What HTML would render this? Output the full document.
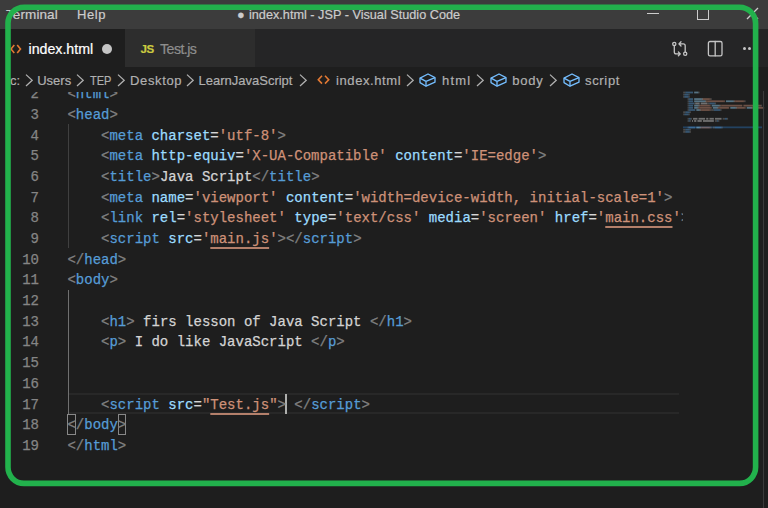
<!DOCTYPE html>
<html><head><meta charset="utf-8">
<style>
html,body{margin:0;padding:0;}
body{width:768px;height:508px;overflow:hidden;position:relative;background:#1e1e1e;font-family:"Liberation Sans",sans-serif;}
.abs{position:absolute;}
#title{left:0;top:0;width:768px;height:29px;background:#3c3c3c;color:#cccccc;font-size:13px;-webkit-text-stroke:0.2px currentColor;}
#title .m{position:absolute;top:7px;line-height:16px;}
#tabs{left:0;top:29px;width:768px;height:38px;background:#252526;-webkit-text-stroke:0.2px currentColor;}
#tab1{left:0;top:0;width:125px;height:38px;background:#1e1e1e;}
#tab2{left:125px;top:0;width:130px;height:38px;background:#2d2d2d;}
.ct{position:absolute;top:5.9px;line-height:15px;white-space:pre;}
#crumbs{left:0;top:67px;width:768px;height:25px;background:#1e1e1e;color:#b0b0b0;font-size:13px;-webkit-text-stroke:0.2px currentColor;}
#editor{left:0;top:92px;width:768px;height:416px;overflow:hidden;}
.ln,.num{position:absolute;white-space:pre;font-family:"Liberation Mono",monospace;font-size:14px;line-height:20.676px;height:20.676px;-webkit-text-stroke:0.25px currentColor;}
.ln{left:67.45px;}
.num{left:0;width:39px;text-align:right;color:#858585;}
.u{text-decoration:underline;text-decoration-color:rgba(206,145,120,0.85);text-decoration-thickness:2px;text-underline-offset:4px;}
#green{left:5px;top:4.5px;width:742.5px;height:470.5px;border:5.5px solid #22b14c;border-radius:19px;}
</style></head><body>
<div id="title" class="abs">
  <div class="m" style="left:6px;font-size:13.5px;letter-spacing:0.1px">Terminal</div>
  <div class="m" style="left:77px;letter-spacing:0.6px">Help</div>
  <div class="m" style="left:237px;font-size:12.7px">&#9679;</div>
  <div class="m" style="left:249px;font-size:12.7px">index.html - JSP - Visual Studio Code</div>
  <div class="abs" style="left:647px;top:13px;width:12px;height:1px;background:#cccccc"></div>
  <div class="abs" style="left:697px;top:7.5px;width:10px;height:10px;border:1px solid #cccccc"></div>
  <svg class="abs" style="left:746px;top:6.5px" width="13" height="13" viewBox="0 0 13 13"><path d="M1 1L12 12M12 1L1 12" stroke="#cccccc" stroke-width="1.35"/></svg>
</div>
<div id="tabs" class="abs">
  <div id="tab1" class="abs">
    <svg class="abs" style="left:10px;top:15px" width="12" height="10" viewBox="0 0 12 10"><path d="M4.3 1L1 5L4.3 9M7.2 1L10.5 5L7.2 9" fill="none" stroke="#e37933" stroke-width="1.6"/></svg>
    <div class="abs" style="left:28.5px;top:11.4px;font-size:14.2px;color:#ffffff;line-height:18px">index.html</div>
    <div class="abs" style="left:101.6px;top:14.9px;width:10px;height:10px;border-radius:50%;background:#c5c5c5"></div>
  </div>
  <div id="tab2" class="abs">
    <div class="abs" style="left:15.5px;top:13px;font-size:11.5px;font-weight:bold;color:#cbcb41;line-height:14px;letter-spacing:-0.3px">JS</div>
    <div class="abs" style="left:35px;top:11.4px;font-size:14.2px;color:#8e8e8e;line-height:18px;letter-spacing:-0.55px">Test.js</div>
  </div>
  <svg class="abs" style="left:666px;top:7px" width="64" height="26" viewBox="0 0 64 26"><g fill="none" stroke="#c5c5c5" stroke-width="1.3" stroke-linecap="round" stroke-linejoin="round"><circle cx="8.3" cy="7.9" r="1.6"/><circle cx="19.2" cy="17.8" r="1.6"/><path d="M8.3 9.6V16Q8.3 17.9 10.2 17.9H14.2M12.4 16L14.3 17.9L12.4 19.8M12.9 7.9H17.3Q19.2 7.9 19.2 9.8V16.1M15 5.8L12.9 7.9L15 10"/><rect x="42.4" y="5.5" width="13.6" height="14.3" rx="1.6"/><path d="M49.2 5.5V19.8"/></g></svg>
  <div class="abs" style="left:742.5px;top:17.5px;width:3px;height:3px;border-radius:50%;background:#c5c5c5"></div>
  <div class="abs" style="left:748px;top:17.5px;width:3px;height:3px;border-radius:50%;background:#c5c5c5"></div>
  <div class="abs" style="left:753.5px;top:17.5px;width:3px;height:3px;border-radius:50%;background:#c5c5c5"></div>
</div>
<div id="crumbs" class="abs">
  <div class="ct" style="left:10px">c:</div>
  <svg class="abs" style="left:24.8px;top:7px" width="8" height="13" viewBox="0 0 8 13"><path d="M1 0.6L7.2 6.3L1 12" fill="none" stroke="#b0b0b0" stroke-width="1.25"/></svg>
  <div class="ct" style="left:37.2px">Users</div>
  <svg class="abs" style="left:76.2px;top:7px" width="8" height="13" viewBox="0 0 8 13"><path d="M1 0.6L7.2 6.3L1 12" fill="none" stroke="#b0b0b0" stroke-width="1.25"/></svg>
  <div class="ct" style="left:90.3px;transform:scaleX(0.85);transform-origin:0 0">TEP</div>
  <svg class="abs" style="left:116.6px;top:7px" width="8" height="13" viewBox="0 0 8 13"><path d="M1 0.6L7.2 6.3L1 12" fill="none" stroke="#b0b0b0" stroke-width="1.25"/></svg>
  <div class="ct" style="left:130px;letter-spacing:0.63px">Desktop</div>
  <svg class="abs" style="left:185.7px;top:7px" width="8" height="13" viewBox="0 0 8 13"><path d="M1 0.6L7.2 6.3L1 12" fill="none" stroke="#b0b0b0" stroke-width="1.25"/></svg>
  <div class="ct" style="left:198.5px">LearnJavaScript</div>
  <svg class="abs" style="left:298.9px;top:7px" width="8" height="13" viewBox="0 0 8 13"><path d="M1 0.6L7.2 6.3L1 12" fill="none" stroke="#b0b0b0" stroke-width="1.25"/></svg>
  <svg class="abs" style="left:316.5px;top:7.7px" width="13" height="10" viewBox="0 0 13 10"><path d="M5 0.8L1.3 4.7L5 8.6M8 0.8L11.7 4.7L8 8.6" fill="none" stroke="#e37933" stroke-width="1.6"/></svg>
  <div class="ct" style="left:336px;letter-spacing:0.6px">index.html</div>
  <svg class="abs" style="left:405.7px;top:7px" width="8" height="13" viewBox="0 0 8 13"><path d="M1 0.6L7.2 6.3L1 12" fill="none" stroke="#b0b0b0" stroke-width="1.25"/></svg>
  <svg class="abs" style="left:419.3px;top:5.5px" width="17" height="14" viewBox="0 0 17 14"><g fill="none" stroke="#75beff" stroke-width="1.3" stroke-linejoin="round"><path d="M9 1L16 4.6V9.2L7 13.2L1 9.6V5.1Z"/><path d="M1 5.1L7 8.4L16 4.6M7 8.4V13.2"/></g></svg>
  <div class="ct" style="left:442px;letter-spacing:1.2px">html</div>
  <svg class="abs" style="left:475.6px;top:7px" width="8" height="13" viewBox="0 0 8 13"><path d="M1 0.6L7.2 6.3L1 12" fill="none" stroke="#b0b0b0" stroke-width="1.25"/></svg>
  <svg class="abs" style="left:489.6px;top:5.5px" width="17" height="14" viewBox="0 0 17 14"><g fill="none" stroke="#75beff" stroke-width="1.3" stroke-linejoin="round"><path d="M9 1L16 4.6V9.2L7 13.2L1 9.6V5.1Z"/><path d="M1 5.1L7 8.4L16 4.6M7 8.4V13.2"/></g></svg>
  <div class="ct" style="left:512.2px;letter-spacing:0.77px">body</div>
  <svg class="abs" style="left:548.9px;top:7px" width="8" height="13" viewBox="0 0 8 13"><path d="M1 0.6L7.2 6.3L1 12" fill="none" stroke="#b0b0b0" stroke-width="1.25"/></svg>
  <svg class="abs" style="left:563.0px;top:5.5px" width="17" height="14" viewBox="0 0 17 14"><g fill="none" stroke="#75beff" stroke-width="1.3" stroke-linejoin="round"><path d="M9 1L16 4.6V9.2L7 13.2L1 9.6V5.1Z"/><path d="M1 5.1L7 8.4L16 4.6M7 8.4V13.2"/></g></svg>
  <div class="ct" style="left:585px;letter-spacing:0.68px">script</div>
</div>
<div id="editor" class="abs">
<div class="abs" style="left:0;top:0;width:768px;height:416px">
<div style="position:absolute;left:0;top:-92px">
<div class="abs" style="left:67.5px;top:124.43px;width:1px;height:124.06px;background:#404040"></div>
<div class="abs" style="left:67.5px;top:289.84px;width:1px;height:124.06px;background:#707070"></div>
<div class="abs" style="left:68.5px;top:393.2px;width:610.5px;height:2.2px;background:#282828"></div>
<div class="abs" style="left:68.5px;top:412.1px;width:610.5px;height:2.2px;background:#282828"></div>
<div class="abs" style="left:67.45px;top:413.89px;width:6.40px;height:18.68px;border:1px solid #888888;box-sizing:content-box"></div>
<div class="abs" style="left:117.86px;top:413.89px;width:6.40px;height:18.68px;border:1px solid #888888;box-sizing:content-box"></div>
<div class="abs" style="left:284.68px;top:393.52px;width:2.4px;height:20.08px;background:#aeafad"></div>
<div class="num" style="top:63.70px">1</div>
<div class="num" style="top:84.38px">2</div>
<div class="num" style="top:105.05px">3</div>
<div class="num" style="top:125.73px">4</div>
<div class="num" style="top:146.40px">5</div>
<div class="num" style="top:167.08px">6</div>
<div class="num" style="top:187.76px">7</div>
<div class="num" style="top:208.43px">8</div>
<div class="num" style="top:229.11px">9</div>
<div class="num" style="top:249.78px">10</div>
<div class="num" style="top:270.46px">11</div>
<div class="num" style="top:291.14px">12</div>
<div class="num" style="top:311.81px">13</div>
<div class="num" style="top:332.49px">14</div>
<div class="num" style="top:353.16px">15</div>
<div class="num" style="top:373.84px">16</div>
<div class="num" style="top:394.52px">17</div>
<div class="num" style="top:415.19px">18</div>
<div class="num" style="top:435.87px">19</div>
<div class="ln" style="top:63.70px"><span style="color:#808080">&lt;!</span><span style="color:#569cd6">DOCTYPE</span><span style="color:#d4d4d4"> </span><span style="color:#9cdcfe">html</span><span style="color:#808080">&gt;</span></div>
<div class="ln" style="top:84.38px"><span style="color:#808080">&lt;</span><span style="color:#569cd6">html</span><span style="color:#808080">&gt;</span></div>
<div class="ln" style="top:105.05px"><span style="color:#808080">&lt;</span><span style="color:#569cd6">head</span><span style="color:#808080">&gt;</span></div>
<div class="ln" style="top:125.73px"><span style="color:#d4d4d4">    </span><span style="color:#808080">&lt;</span><span style="color:#569cd6">meta</span><span style="color:#d4d4d4"> </span><span style="color:#9cdcfe">charset</span><span style="color:#d4d4d4">=</span><span style="color:#ce9178">&#x27;</span><span style="color:#ce9178">utf-8</span><span style="color:#ce9178">&#x27;</span><span style="color:#808080">&gt;</span></div>
<div class="ln" style="top:146.40px"><span style="color:#d4d4d4">    </span><span style="color:#808080">&lt;</span><span style="color:#569cd6">meta</span><span style="color:#d4d4d4"> </span><span style="color:#9cdcfe">http-equiv</span><span style="color:#d4d4d4">=</span><span style="color:#ce9178">&#x27;</span><span style="color:#ce9178">X-UA-Compatible</span><span style="color:#ce9178">&#x27;</span><span style="color:#d4d4d4"> </span><span style="color:#9cdcfe">content</span><span style="color:#d4d4d4">=</span><span style="color:#ce9178">&#x27;</span><span style="color:#ce9178">IE=edge</span><span style="color:#ce9178">&#x27;</span><span style="color:#808080">&gt;</span></div>
<div class="ln" style="top:167.08px"><span style="color:#d4d4d4">    </span><span style="color:#808080">&lt;</span><span style="color:#569cd6">title</span><span style="color:#808080">&gt;</span><span style="color:#d4d4d4">Java Script</span><span style="color:#808080">&lt;/</span><span style="color:#569cd6">title</span><span style="color:#808080">&gt;</span></div>
<div class="ln" style="top:187.76px"><span style="color:#d4d4d4">    </span><span style="color:#808080">&lt;</span><span style="color:#569cd6">meta</span><span style="color:#d4d4d4"> </span><span style="color:#9cdcfe">name</span><span style="color:#d4d4d4">=</span><span style="color:#ce9178">&#x27;</span><span style="color:#ce9178">viewport</span><span style="color:#ce9178">&#x27;</span><span style="color:#d4d4d4"> </span><span style="color:#9cdcfe">content</span><span style="color:#d4d4d4">=</span><span style="color:#ce9178">&#x27;</span><span style="color:#ce9178">width=device-width, initial-scale=1</span><span style="color:#ce9178">&#x27;</span><span style="color:#808080">&gt;</span></div>
<div class="ln" style="top:208.43px"><span style="color:#d4d4d4">    </span><span style="color:#808080">&lt;</span><span style="color:#569cd6">link</span><span style="color:#d4d4d4"> </span><span style="color:#9cdcfe">rel</span><span style="color:#d4d4d4">=</span><span style="color:#ce9178">&#x27;</span><span style="color:#ce9178">stylesheet</span><span style="color:#ce9178">&#x27;</span><span style="color:#d4d4d4"> </span><span style="color:#9cdcfe">type</span><span style="color:#d4d4d4">=</span><span style="color:#ce9178">&#x27;</span><span style="color:#ce9178">text/css</span><span style="color:#ce9178">&#x27;</span><span style="color:#d4d4d4"> </span><span style="color:#9cdcfe">media</span><span style="color:#d4d4d4">=</span><span style="color:#ce9178">&#x27;</span><span style="color:#ce9178">screen</span><span style="color:#ce9178">&#x27;</span><span style="color:#d4d4d4"> </span><span style="color:#9cdcfe">href</span><span style="color:#d4d4d4">=</span><span style="color:#ce9178">&#x27;</span><span style="color:#ce9178" class="u">main.css</span><span style="color:#ce9178">&#x27;</span><span style="color:#808080">&gt;</span></div>
<div class="ln" style="top:229.11px"><span style="color:#d4d4d4">    </span><span style="color:#808080">&lt;</span><span style="color:#569cd6">script</span><span style="color:#d4d4d4"> </span><span style="color:#9cdcfe">src</span><span style="color:#d4d4d4">=</span><span style="color:#ce9178">&#x27;</span><span style="color:#ce9178" class="u">main.js</span><span style="color:#ce9178">&#x27;</span><span style="color:#808080">&gt;</span><span style="color:#808080">&lt;/</span><span style="color:#569cd6">script</span><span style="color:#808080">&gt;</span></div>
<div class="ln" style="top:249.78px"><span style="color:#808080">&lt;/</span><span style="color:#569cd6">head</span><span style="color:#808080">&gt;</span></div>
<div class="ln" style="top:270.46px"><span style="color:#808080">&lt;</span><span style="color:#569cd6">body</span><span style="color:#808080">&gt;</span></div>
<div class="ln" style="top:291.14px"></div>
<div class="ln" style="top:311.81px"><span style="color:#d4d4d4">    </span><span style="color:#808080">&lt;</span><span style="color:#569cd6">h1</span><span style="color:#808080">&gt;</span><span style="color:#d4d4d4"> firs lesson of Java Script </span><span style="color:#808080">&lt;/</span><span style="color:#569cd6">h1</span><span style="color:#808080">&gt;</span></div>
<div class="ln" style="top:332.49px"><span style="color:#d4d4d4">    </span><span style="color:#808080">&lt;</span><span style="color:#569cd6">p</span><span style="color:#808080">&gt;</span><span style="color:#d4d4d4"> I do like JavaScript </span><span style="color:#808080">&lt;/</span><span style="color:#569cd6">p</span><span style="color:#808080">&gt;</span></div>
<div class="ln" style="top:353.16px"></div>
<div class="ln" style="top:373.84px"></div>
<div class="ln" style="top:394.52px"><span style="color:#d4d4d4">    </span><span style="color:#808080">&lt;</span><span style="color:#569cd6">script</span><span style="color:#d4d4d4"> </span><span style="color:#9cdcfe">src</span><span style="color:#d4d4d4">=</span><span style="color:#ce9178">&quot;</span><span style="color:#ce9178" class="u">Test.js</span><span style="color:#ce9178">&quot;</span><span style="color:#808080">&gt;</span><span style="color:#d4d4d4"> </span><span style="color:#808080">&lt;/</span><span style="color:#569cd6">script</span><span style="color:#808080">&gt;</span></div>
<div class="ln" style="top:415.19px"><span style="color:#808080">&lt;/</span><span style="color:#569cd6">body</span><span style="color:#808080">&gt;</span></div>
<div class="ln" style="top:435.87px"><span style="color:#808080">&lt;/</span><span style="color:#569cd6">html</span><span style="color:#808080">&gt;</span></div>
</div>
</div>
</div>
<div class="abs" style="left:683px;top:92px;width:85px;height:416px;background:#1e1e1e"></div>
<svg class="abs" style="left:0;top:0" width="768" height="508">
<rect x="683" y="126.44" width="79" height="1.8" fill="#264f78" fill-opacity="0.75"/>
<rect x="683.20" y="91.60" width="2.19" height="1.8" fill="#808080" fill-opacity="0.45"/>
<rect x="685.39" y="91.60" width="7.67" height="1.8" fill="#569cd6" fill-opacity="0.45"/>
<rect x="694.15" y="91.60" width="4.38" height="1.8" fill="#9cdcfe" fill-opacity="0.45"/>
<rect x="698.53" y="91.60" width="1.09" height="1.8" fill="#808080" fill-opacity="0.45"/>
<rect x="683.20" y="93.79" width="1.09" height="1.8" fill="#808080" fill-opacity="0.45"/>
<rect x="684.30" y="93.79" width="4.38" height="1.8" fill="#569cd6" fill-opacity="0.45"/>
<rect x="688.68" y="93.79" width="1.09" height="1.8" fill="#808080" fill-opacity="0.45"/>
<rect x="683.20" y="95.98" width="1.09" height="1.8" fill="#808080" fill-opacity="0.45"/>
<rect x="684.30" y="95.98" width="4.38" height="1.8" fill="#569cd6" fill-opacity="0.45"/>
<rect x="688.68" y="95.98" width="1.09" height="1.8" fill="#808080" fill-opacity="0.45"/>
<rect x="687.58" y="98.17" width="1.09" height="1.8" fill="#808080" fill-opacity="0.45"/>
<rect x="688.68" y="98.17" width="4.38" height="1.8" fill="#569cd6" fill-opacity="0.45"/>
<rect x="694.15" y="98.17" width="7.67" height="1.8" fill="#9cdcfe" fill-opacity="0.45"/>
<rect x="701.82" y="98.17" width="1.09" height="1.8" fill="#d4d4d4" fill-opacity="0.45"/>
<rect x="702.91" y="98.17" width="1.09" height="1.8" fill="#ce9178" fill-opacity="0.45"/>
<rect x="704.00" y="98.17" width="5.47" height="1.8" fill="#ce9178" fill-opacity="0.45"/>
<rect x="709.48" y="98.17" width="1.09" height="1.8" fill="#ce9178" fill-opacity="0.45"/>
<rect x="710.58" y="98.17" width="1.09" height="1.8" fill="#808080" fill-opacity="0.45"/>
<rect x="687.58" y="100.36" width="1.09" height="1.8" fill="#808080" fill-opacity="0.45"/>
<rect x="688.68" y="100.36" width="4.38" height="1.8" fill="#569cd6" fill-opacity="0.45"/>
<rect x="694.15" y="100.36" width="10.95" height="1.8" fill="#9cdcfe" fill-opacity="0.45"/>
<rect x="705.10" y="100.36" width="1.09" height="1.8" fill="#d4d4d4" fill-opacity="0.45"/>
<rect x="706.20" y="100.36" width="1.09" height="1.8" fill="#ce9178" fill-opacity="0.45"/>
<rect x="707.29" y="100.36" width="16.43" height="1.8" fill="#ce9178" fill-opacity="0.45"/>
<rect x="723.72" y="100.36" width="1.09" height="1.8" fill="#ce9178" fill-opacity="0.45"/>
<rect x="725.91" y="100.36" width="7.67" height="1.8" fill="#9cdcfe" fill-opacity="0.45"/>
<rect x="733.57" y="100.36" width="1.09" height="1.8" fill="#d4d4d4" fill-opacity="0.45"/>
<rect x="734.67" y="100.36" width="1.09" height="1.8" fill="#ce9178" fill-opacity="0.45"/>
<rect x="735.76" y="100.36" width="7.67" height="1.8" fill="#ce9178" fill-opacity="0.45"/>
<rect x="743.43" y="100.36" width="1.09" height="1.8" fill="#ce9178" fill-opacity="0.45"/>
<rect x="744.52" y="100.36" width="1.09" height="1.8" fill="#808080" fill-opacity="0.45"/>
<rect x="687.58" y="102.55" width="1.09" height="1.8" fill="#808080" fill-opacity="0.45"/>
<rect x="688.68" y="102.55" width="5.47" height="1.8" fill="#569cd6" fill-opacity="0.45"/>
<rect x="694.15" y="102.55" width="1.09" height="1.8" fill="#808080" fill-opacity="0.45"/>
<rect x="695.25" y="102.55" width="4.38" height="1.8" fill="#d4d4d4" fill-opacity="0.45"/>
<rect x="700.72" y="102.55" width="6.57" height="1.8" fill="#d4d4d4" fill-opacity="0.45"/>
<rect x="707.29" y="102.55" width="2.19" height="1.8" fill="#808080" fill-opacity="0.45"/>
<rect x="709.48" y="102.55" width="5.47" height="1.8" fill="#569cd6" fill-opacity="0.45"/>
<rect x="714.96" y="102.55" width="1.09" height="1.8" fill="#808080" fill-opacity="0.45"/>
<rect x="687.58" y="104.74" width="1.09" height="1.8" fill="#808080" fill-opacity="0.45"/>
<rect x="688.68" y="104.74" width="4.38" height="1.8" fill="#569cd6" fill-opacity="0.45"/>
<rect x="694.15" y="104.74" width="4.38" height="1.8" fill="#9cdcfe" fill-opacity="0.45"/>
<rect x="698.53" y="104.74" width="1.09" height="1.8" fill="#d4d4d4" fill-opacity="0.45"/>
<rect x="699.62" y="104.74" width="1.09" height="1.8" fill="#ce9178" fill-opacity="0.45"/>
<rect x="700.72" y="104.74" width="8.76" height="1.8" fill="#ce9178" fill-opacity="0.45"/>
<rect x="709.48" y="104.74" width="1.09" height="1.8" fill="#ce9178" fill-opacity="0.45"/>
<rect x="711.67" y="104.74" width="7.67" height="1.8" fill="#9cdcfe" fill-opacity="0.45"/>
<rect x="719.34" y="104.74" width="1.09" height="1.8" fill="#d4d4d4" fill-opacity="0.45"/>
<rect x="720.43" y="104.74" width="1.09" height="1.8" fill="#ce9178" fill-opacity="0.45"/>
<rect x="721.53" y="104.74" width="20.80" height="1.8" fill="#ce9178" fill-opacity="0.45"/>
<rect x="743.43" y="104.74" width="16.43" height="1.8" fill="#ce9178" fill-opacity="0.45"/>
<rect x="759.85" y="104.74" width="1.09" height="1.8" fill="#ce9178" fill-opacity="0.45"/>
<rect x="760.95" y="104.74" width="1.09" height="1.8" fill="#808080" fill-opacity="0.45"/>
<rect x="687.58" y="106.93" width="1.09" height="1.8" fill="#808080" fill-opacity="0.45"/>
<rect x="688.68" y="106.93" width="4.38" height="1.8" fill="#569cd6" fill-opacity="0.45"/>
<rect x="694.15" y="106.93" width="3.29" height="1.8" fill="#9cdcfe" fill-opacity="0.45"/>
<rect x="697.44" y="106.93" width="1.09" height="1.8" fill="#d4d4d4" fill-opacity="0.45"/>
<rect x="698.53" y="106.93" width="1.09" height="1.8" fill="#ce9178" fill-opacity="0.45"/>
<rect x="699.62" y="106.93" width="10.95" height="1.8" fill="#ce9178" fill-opacity="0.45"/>
<rect x="710.58" y="106.93" width="1.09" height="1.8" fill="#ce9178" fill-opacity="0.45"/>
<rect x="712.77" y="106.93" width="4.38" height="1.8" fill="#9cdcfe" fill-opacity="0.45"/>
<rect x="717.15" y="106.93" width="1.09" height="1.8" fill="#d4d4d4" fill-opacity="0.45"/>
<rect x="718.24" y="106.93" width="1.09" height="1.8" fill="#ce9178" fill-opacity="0.45"/>
<rect x="719.34" y="106.93" width="8.76" height="1.8" fill="#ce9178" fill-opacity="0.45"/>
<rect x="728.10" y="106.93" width="1.09" height="1.8" fill="#ce9178" fill-opacity="0.45"/>
<rect x="730.29" y="106.93" width="5.47" height="1.8" fill="#9cdcfe" fill-opacity="0.45"/>
<rect x="735.76" y="106.93" width="1.09" height="1.8" fill="#d4d4d4" fill-opacity="0.45"/>
<rect x="736.86" y="106.93" width="1.09" height="1.8" fill="#ce9178" fill-opacity="0.45"/>
<rect x="737.95" y="106.93" width="6.57" height="1.8" fill="#ce9178" fill-opacity="0.45"/>
<rect x="744.52" y="106.93" width="1.09" height="1.8" fill="#ce9178" fill-opacity="0.45"/>
<rect x="746.71" y="106.93" width="4.38" height="1.8" fill="#9cdcfe" fill-opacity="0.45"/>
<rect x="751.09" y="106.93" width="1.09" height="1.8" fill="#d4d4d4" fill-opacity="0.45"/>
<rect x="752.19" y="106.93" width="1.09" height="1.8" fill="#ce9178" fill-opacity="0.45"/>
<rect x="753.28" y="106.93" width="8.76" height="1.8" fill="#ce9178" fill-opacity="0.45"/>
<rect x="762.04" y="106.93" width="1.09" height="1.8" fill="#ce9178" fill-opacity="0.45"/>
<rect x="763.13" y="106.93" width="1.09" height="1.8" fill="#808080" fill-opacity="0.45"/>
<rect x="687.58" y="109.12" width="1.09" height="1.8" fill="#808080" fill-opacity="0.45"/>
<rect x="688.68" y="109.12" width="6.57" height="1.8" fill="#569cd6" fill-opacity="0.45"/>
<rect x="696.34" y="109.12" width="3.29" height="1.8" fill="#9cdcfe" fill-opacity="0.45"/>
<rect x="699.62" y="109.12" width="1.09" height="1.8" fill="#d4d4d4" fill-opacity="0.45"/>
<rect x="700.72" y="109.12" width="1.09" height="1.8" fill="#ce9178" fill-opacity="0.45"/>
<rect x="701.82" y="109.12" width="7.67" height="1.8" fill="#ce9178" fill-opacity="0.45"/>
<rect x="709.48" y="109.12" width="1.09" height="1.8" fill="#ce9178" fill-opacity="0.45"/>
<rect x="710.58" y="109.12" width="1.09" height="1.8" fill="#808080" fill-opacity="0.45"/>
<rect x="711.67" y="109.12" width="2.19" height="1.8" fill="#808080" fill-opacity="0.45"/>
<rect x="713.86" y="109.12" width="6.57" height="1.8" fill="#569cd6" fill-opacity="0.45"/>
<rect x="720.43" y="109.12" width="1.09" height="1.8" fill="#808080" fill-opacity="0.45"/>
<rect x="683.20" y="111.31" width="2.19" height="1.8" fill="#808080" fill-opacity="0.45"/>
<rect x="685.39" y="111.31" width="4.38" height="1.8" fill="#569cd6" fill-opacity="0.45"/>
<rect x="689.77" y="111.31" width="1.09" height="1.8" fill="#808080" fill-opacity="0.45"/>
<rect x="683.20" y="113.50" width="1.09" height="1.8" fill="#808080" fill-opacity="0.45"/>
<rect x="684.30" y="113.50" width="4.38" height="1.8" fill="#569cd6" fill-opacity="0.45"/>
<rect x="688.68" y="113.50" width="1.09" height="1.8" fill="#808080" fill-opacity="0.45"/>
<rect x="687.58" y="117.88" width="1.09" height="1.8" fill="#808080" fill-opacity="0.45"/>
<rect x="688.68" y="117.88" width="2.19" height="1.8" fill="#569cd6" fill-opacity="0.45"/>
<rect x="690.87" y="117.88" width="1.09" height="1.8" fill="#808080" fill-opacity="0.45"/>
<rect x="693.06" y="117.88" width="4.38" height="1.8" fill="#d4d4d4" fill-opacity="0.45"/>
<rect x="698.53" y="117.88" width="6.57" height="1.8" fill="#d4d4d4" fill-opacity="0.45"/>
<rect x="706.20" y="117.88" width="2.19" height="1.8" fill="#d4d4d4" fill-opacity="0.45"/>
<rect x="709.48" y="117.88" width="4.38" height="1.8" fill="#d4d4d4" fill-opacity="0.45"/>
<rect x="714.96" y="117.88" width="6.57" height="1.8" fill="#d4d4d4" fill-opacity="0.45"/>
<rect x="722.62" y="117.88" width="2.19" height="1.8" fill="#808080" fill-opacity="0.45"/>
<rect x="724.81" y="117.88" width="2.19" height="1.8" fill="#569cd6" fill-opacity="0.45"/>
<rect x="727.00" y="117.88" width="1.09" height="1.8" fill="#808080" fill-opacity="0.45"/>
<rect x="687.58" y="120.07" width="1.09" height="1.8" fill="#808080" fill-opacity="0.45"/>
<rect x="688.68" y="120.07" width="1.09" height="1.8" fill="#569cd6" fill-opacity="0.45"/>
<rect x="689.77" y="120.07" width="1.09" height="1.8" fill="#808080" fill-opacity="0.45"/>
<rect x="691.96" y="120.07" width="1.09" height="1.8" fill="#d4d4d4" fill-opacity="0.45"/>
<rect x="694.15" y="120.07" width="2.19" height="1.8" fill="#d4d4d4" fill-opacity="0.45"/>
<rect x="697.44" y="120.07" width="4.38" height="1.8" fill="#d4d4d4" fill-opacity="0.45"/>
<rect x="702.91" y="120.07" width="10.95" height="1.8" fill="#d4d4d4" fill-opacity="0.45"/>
<rect x="714.96" y="120.07" width="2.19" height="1.8" fill="#808080" fill-opacity="0.45"/>
<rect x="717.15" y="120.07" width="1.09" height="1.8" fill="#569cd6" fill-opacity="0.45"/>
<rect x="718.24" y="120.07" width="1.09" height="1.8" fill="#808080" fill-opacity="0.45"/>
<rect x="687.58" y="126.64" width="1.09" height="1.8" fill="#808080" fill-opacity="0.45"/>
<rect x="688.68" y="126.64" width="6.57" height="1.8" fill="#569cd6" fill-opacity="0.45"/>
<rect x="696.34" y="126.64" width="3.29" height="1.8" fill="#9cdcfe" fill-opacity="0.45"/>
<rect x="699.62" y="126.64" width="1.09" height="1.8" fill="#d4d4d4" fill-opacity="0.45"/>
<rect x="700.72" y="126.64" width="1.09" height="1.8" fill="#ce9178" fill-opacity="0.45"/>
<rect x="701.82" y="126.64" width="7.67" height="1.8" fill="#ce9178" fill-opacity="0.45"/>
<rect x="709.48" y="126.64" width="1.09" height="1.8" fill="#ce9178" fill-opacity="0.45"/>
<rect x="710.58" y="126.64" width="1.09" height="1.8" fill="#808080" fill-opacity="0.45"/>
<rect x="712.77" y="126.64" width="2.19" height="1.8" fill="#808080" fill-opacity="0.45"/>
<rect x="714.96" y="126.64" width="6.57" height="1.8" fill="#569cd6" fill-opacity="0.45"/>
<rect x="721.53" y="126.64" width="1.09" height="1.8" fill="#808080" fill-opacity="0.45"/>
<rect x="683.20" y="128.83" width="2.19" height="1.8" fill="#808080" fill-opacity="0.45"/>
<rect x="685.39" y="128.83" width="4.38" height="1.8" fill="#569cd6" fill-opacity="0.45"/>
<rect x="689.77" y="128.83" width="1.09" height="1.8" fill="#808080" fill-opacity="0.45"/>
<rect x="683.20" y="131.02" width="2.19" height="1.8" fill="#808080" fill-opacity="0.45"/>
<rect x="685.39" y="131.02" width="4.38" height="1.8" fill="#569cd6" fill-opacity="0.45"/>
<rect x="689.77" y="131.02" width="1.09" height="1.8" fill="#808080" fill-opacity="0.45"/>
</svg>
<div class="abs" style="left:763px;top:91px;width:1px;height:417px;background:#3a3a3a"></div>
<svg class="abs" style="left:0;top:0" width="768" height="508"><rect x="8" y="7.2" width="747.6" height="476.15" rx="16" ry="16" fill="none" stroke="#22b14c" stroke-width="5.6"/></svg>
</body></html>
